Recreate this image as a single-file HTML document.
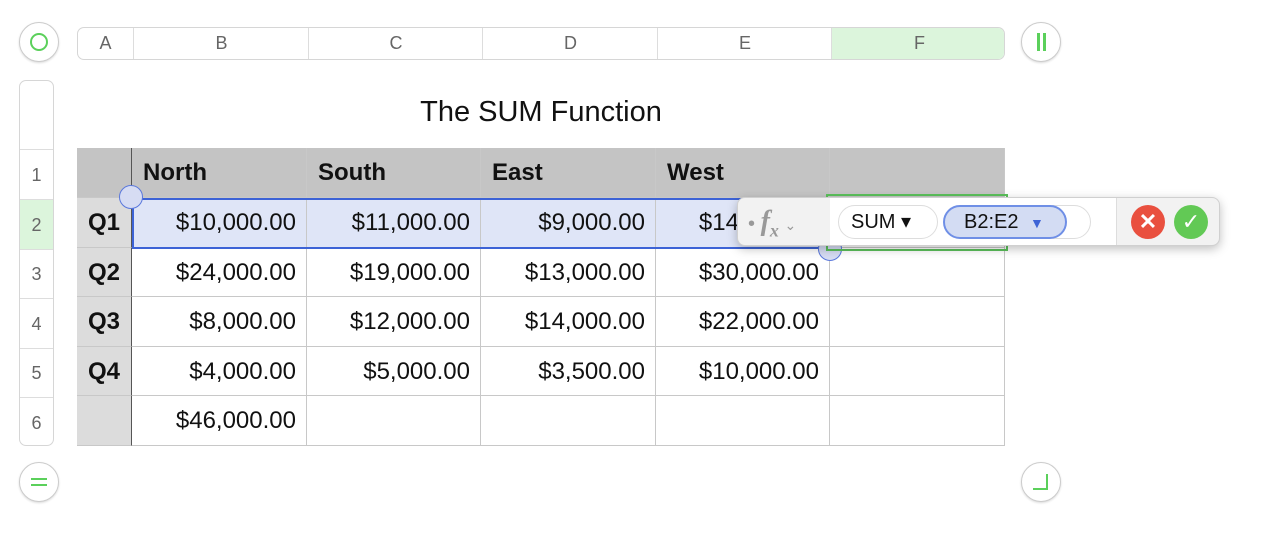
<!DOCTYPE html><html><head><style>
body{margin:0;width:1280px;height:540px;background:#fff;font-family:"Liberation Sans",sans-serif;position:relative;overflow:hidden}
.a{position:absolute;box-sizing:border-box}
.ch{top:27px;height:33px;border:1px solid #d6d6d6;border-radius:7px;overflow:hidden;left:77px;width:928px;background:#fff}
.cc{position:absolute;top:0;height:31px;line-height:31px;text-align:center;color:#666;font-size:18px;border-left:1px solid #ddd}
.rh{left:19px;width:35px;top:80px;height:366px;border:1px solid #d6d6d6;border-radius:7px;overflow:hidden;background:#fff}
.rc{position:absolute;left:0;width:33px;text-align:center;color:#666;font-size:18px;border-top:1px solid #ddd}
.cell{position:absolute;box-sizing:border-box;border-right:1px solid #c8c8c8;border-bottom:1px solid #c8c8c8;font-size:24px;color:#111;text-align:right;padding-right:10px;overflow:hidden;white-space:nowrap}
.btn{position:absolute;width:40px;height:40px;border-radius:50%;border:1px solid #ccc;background:#fff;box-shadow:0 1px 2px rgba(0,0,0,.15);box-sizing:border-box}
</style></head><body>
<div class="btn" style="left:19px;top:22px"><div class="a" style="left:10px;top:10px;width:18px;height:18px;border:2px solid #5bd05b;border-radius:50%"></div></div>
<div class="btn" style="left:1021px;top:22px"><div class="a" style="left:15px;top:10px;width:3px;height:18px;background:#5bd05b"></div><div class="a" style="left:21px;top:10px;width:3px;height:18px;background:#5bd05b"></div></div>
<div class="btn" style="left:19px;top:462px"><div class="a" style="left:11px;top:15px;width:16px;height:2px;background:#5bd05b"></div><div class="a" style="left:11px;top:21px;width:16px;height:2px;background:#5bd05b"></div></div>
<div class="btn" style="left:1021px;top:462px"><div class="a" style="left:24px;top:11px;width:2px;height:16px;background:#5bd05b"></div><div class="a" style="left:11px;top:25px;width:15px;height:2px;background:#5bd05b"></div></div>

<div class="a ch">
<div class="cc" style="left:0;width:55px;border-left:none">A</div>
<div class="cc" style="left:55px;width:175px">B</div>
<div class="cc" style="left:230px;width:174px">C</div>
<div class="cc" style="left:404px;width:175px">D</div>
<div class="cc" style="left:579px;width:174px">E</div>
<div class="cc" style="left:753px;width:175px;background:#dcf5dc">F</div>
</div>
<div class="a rh">
<div class="rc" style="top:68px;height:50px;line-height:50px">1</div>
<div class="rc" style="top:118px;height:50px;line-height:50px;background:#dcf5dc">2</div>
<div class="rc" style="top:168px;height:49px;line-height:49px">3</div>
<div class="rc" style="top:217px;height:50px;line-height:50px">4</div>
<div class="rc" style="top:267px;height:49px;line-height:49px">5</div>
<div class="rc" style="top:316px;height:50px;line-height:50px">6</div>
</div>
<div class="a" style="left:77px;top:96px;width:928px;text-align:center;font-size:29px;color:#111">The SUM Function</div>

<div class="a" style="left:77px;top:148px;width:928px;height:298px;border:1px solid #bbb;border-width:1px 0 2px 1px;box-sizing:border-box"></div>
<div id="g"></div>
<script>
var cols=[77,132,307,481,656,830,1005],rows=[148,198,248,297,347,396,446];
var d=[["","North","South","East","West",""],["Q1","$10,000.00","$11,000.00","$9,000.00","$14,000.00",""],["Q2","$24,000.00","$19,000.00","$13,000.00","$30,000.00",""],["Q3","$8,000.00","$12,000.00","$14,000.00","$22,000.00",""],["Q4","$4,000.00","$5,000.00","$3,500.00","$10,000.00",""],["","$46,000.00","","","",""]];
var h="";
for(var r=0;r<6;r++)for(var c=0;c<6;c++){var bg="#fff",st="";
if(r==0){bg="#c4c4c4";st="font-weight:bold;text-align:left;padding-left:11px;";}
else if(c==0){bg="#dcdcdc";st="font-weight:bold;text-align:center;padding-right:0;";}
if(r==1&&c>0&&c<5)bg="#dfe5f7";
if(c==0)st+="border-right:1px solid #555;";
h+='<div class="cell" style="left:'+cols[c]+'px;top:'+rows[r]+'px;width:'+(cols[c+1]-cols[c])+'px;height:'+(rows[r+1]-rows[r])+'px;line-height:'+(rows[r+1]-rows[r])+'px;background:'+bg+';'+st+'">'+d[r][c]+'</div>';}
document.getElementById("g").innerHTML=h;
</script>
<div class="a" style="left:132px;top:198px;width:699px;height:51px;border:2px solid #3d63d6"></div>
<div class="a" style="left:119px;top:185px;width:24px;height:24px;border-radius:50%;background:#d6dcf3;border:1px solid #5a78dc"></div>
<div class="a" style="left:818px;top:237px;width:24px;height:24px;border-radius:50%;background:#d6dcf3;border:1px solid #5a78dc"></div>
<div class="a" style="left:826px;top:194px;width:182px;height:57px;border:2px solid #5bc05b"></div>

<div class="a" style="left:737px;top:197px;width:483px;height:49px;border-radius:8px;background:#f2f2f2;border:1px solid #d0d0d0;box-shadow:0 3px 10px rgba(0,0,0,.25);overflow:hidden">
<div class="a" style="left:0;top:0;width:92px;height:47px;font-size:20px;color:#999;line-height:47px;padding-left:10px">•&nbsp;<i style="font-family:'Liberation Serif',serif;font-size:28px;font-weight:bold">f<sub style="font-size:18px">x</sub></i>&nbsp;<span style="font-size:14px">⌄</span></div>
<div class="a" style="left:92px;top:0;width:287px;height:47px;background:#fff;border-right:1px solid #ddd"></div>
<div class="a" style="left:100px;top:7px;width:100px;height:34px;border-radius:17px;border:1px solid #ddd;background:#fff;font-size:20px;line-height:32px;padding-left:12px;color:#111">SUM ▾</div>
<div class="a" style="left:300px;top:7px;width:53px;height:34px;border-radius:17px;border:1px solid #ddd;background:#fff"></div>
<div class="a" style="left:205px;top:7px;width:124px;height:34px;border-radius:17px;border:2px solid #6f8fe6;background:#d3dcf3;font-size:20px;line-height:30px;padding-left:19px;color:#111">B2:E2 <span style="color:#3d63d6;font-size:14px;margin-left:6px">▼</span></div>
<div class="a" style="left:393px;top:7px;width:34px;height:34px;border-radius:50%;background:#e9503f;color:#fff;text-align:center;line-height:34px;font-size:22px;font-weight:bold">✕</div>
<div class="a" style="left:436px;top:7px;width:34px;height:34px;border-radius:50%;background:#62c955;color:#fff;text-align:center;line-height:34px;font-size:22px">✓</div>
</div>
</body></html>
